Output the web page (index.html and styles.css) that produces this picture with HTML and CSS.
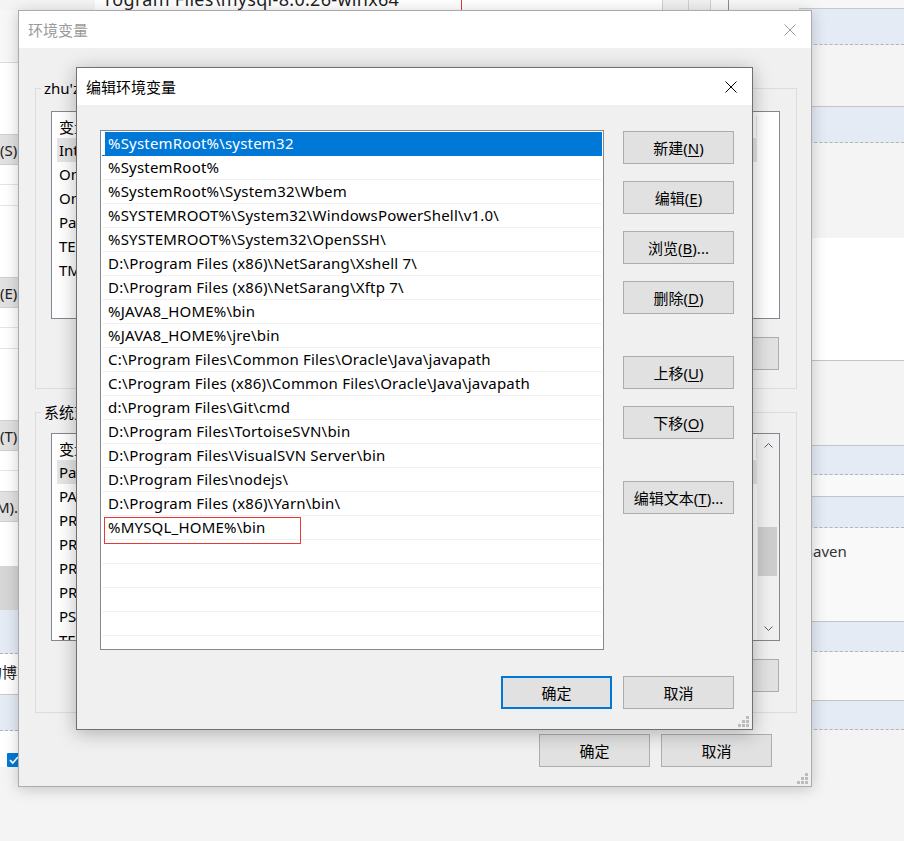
FILE: index.html
```html
<!DOCTYPE html>
<html lang="zh-CN">
<head>
  <meta charset="UTF-8">
  <meta name="viewport" content="width=device-width, initial-scale=1.0">
  <title>编辑环境变量</title>
  <link rel="stylesheet" href="styles.css">
</head>
<body>
  <div class="desktop">

    <!-- window behind both dialogs: top edge -->
    <div class="bg-top">
      <div class="bg-gap"></div>
      <div class="bg-path"><span class="bg-path-text">rogram Files\mysql-8.0.26-winx64</span></div>
      <div class="bg-mark"></div>
      <div class="bg-col bg-col-a"></div>
      <div class="bg-col bg-col-b"></div>
      <div class="bg-col bg-col-c"></div>
      <div class="bg-rest"></div>
    </div>

    <!-- window behind: left edge -->
    <div class="bg-left">
      <div class="bl-head"></div>
      <div class="bl-blank"></div>
      <div class="bl-btn">(S)...</div>
      <div class="bl-line bl-line-a"></div>
      <div class="bl-line bl-line-b"></div>
      <div class="bl-blank"></div>
      <div class="bl-btn">(E)...</div>
      <div class="bl-line bl-line-a"></div>
      <div class="bl-line bl-line-b"></div>
      <div class="bl-blank"></div>
      <div class="bl-btn">(T)...</div>
      <div class="bl-line bl-line-a"></div>
      <div class="bl-spacer"></div>
      <div class="bl-btn bl-btn-m">M)...</div>
      <div class="bl-tail"></div>
      <div class="bl-dark"></div>
      <div class="band band-tall"></div>
      <div class="bl-text">的博客</div>
      <div class="band band-mid"></div>
      <div class="bl-check">
        <svg width="14" height="14" viewBox="0 0 14 14"><path d="M3 7.2L5.8 10L11 4" fill="none" stroke="#fff" stroke-width="1.8"/></svg>
      </div>
    </div>

    <!-- window behind: right edge -->
    <div class="bg-right">
      <div class="br-top"></div>
      <div class="band band-36"></div>
      <div class="br-grey br-grey-62"></div>
      <div class="band band-36"></div>
      <div class="br-plain"></div>
      <div class="br-white br-white-123"></div>
      <div class="br-grey br-grey-85"></div>
      <div class="band band-29"></div>
      <div class="br-white br-white-22"></div>
      <div class="band band-31"></div>
      <div class="br-white br-white-94"><span class="br-text">maven</span></div>
      <div class="band band-30"></div>
      <div class="br-white br-white-49"></div>
      <div class="band band-29"></div>
    </div>

    <!-- 环境变量 dialog -->
    <div class="window window-env">
      <div class="titlebar is-inactive">
        <span class="title">环境变量</span>
        <span class="close">
          <svg width="12" height="12" viewBox="0 0 12 12"><path d="M0.5 0.5L11.5 11.5M11.5 0.5L0.5 11.5" stroke="currentColor" stroke-width="1"/></svg>
        </span>
      </div>
      <div class="env-body">
        <div class="group">
          <span class="group-label">zhu'zi 的用户变量(U)</span>
          <div class="vlist">
            <div class="vlist-main">
              <div class="vlist-head"><span class="col-name">变量</span><span class="col-value">值</span></div>
              <div class="vlist-row is-current"><span class="col-name">IntelliJ IDEA</span><span class="col-value">D:\Program Files\JetBrains\IntelliJ IDEA\bin;</span></div>
              <div class="vlist-row"><span class="col-name">OneDrive</span><span class="col-value">C:\Users\zhu'zi\OneDrive</span></div>
              <div class="vlist-row"><span class="col-name">OneDriveConsumer</span><span class="col-value">C:\Users\zhu'zi\OneDrive</span></div>
              <div class="vlist-row"><span class="col-name">Path</span><span class="col-value">C:\Users\zhu'zi\AppData\Local\Microsoft\WindowsApps;</span></div>
              <div class="vlist-row"><span class="col-name">TEMP</span><span class="col-value">C:\Users\zhu'zi\AppData\Local\Temp</span></div>
              <div class="vlist-row"><span class="col-name">TMP</span><span class="col-value">C:\Users\zhu'zi\AppData\Local\Temp</span></div>
            </div>
            <div class="vlist-side"></div>
          </div>
          <div class="group-actions">
            <button class="btn">新建(<u>N</u>)...</button>
            <button class="btn">编辑(<u>E</u>)...</button>
            <button class="btn">删除(<u>D</u>)</button>
          </div>
        </div>

        <div class="group group-system">
          <span class="group-label">系统变量(S)</span>
          <div class="vlist">
            <div class="vlist-main">
              <div class="vlist-head"><span class="col-name">变量</span><span class="col-value">值</span></div>
              <div class="vlist-row is-current"><span class="col-name">Path</span><span class="col-value">%SystemRoot%\system32;%SystemRoot%</span></div>
              <div class="vlist-row"><span class="col-name">PATHEXT</span><span class="col-value">.COM;.EXE;.BAT;.CMD;.VBS;.VBE;.JS</span></div>
              <div class="vlist-row"><span class="col-name">PROCESSOR_ARCHITECTURE</span><span class="col-value">AMD64</span></div>
              <div class="vlist-row"><span class="col-name">PROCESSOR_IDENTIFIER</span><span class="col-value">Intel64 Family 6</span></div>
              <div class="vlist-row"><span class="col-name">PROCESSOR_LEVEL</span><span class="col-value">6</span></div>
              <div class="vlist-row"><span class="col-name">PROCESSOR_REVISION</span><span class="col-value">9e0a</span></div>
              <div class="vlist-row"><span class="col-name">PSModulePath</span><span class="col-value">%ProgramFiles%\WindowsPowerShell\Modules</span></div>
              <div class="vlist-row"><span class="col-name">TEMP</span><span class="col-value">C:\Windows\TEMP</span></div>
            </div>
            <div class="vscroll">
              <div class="vscroll-btn">
                <svg width="9" height="5" viewBox="0 0 9 5"><path d="M0.5 4.5L4.5 0.5L8.5 4.5" fill="none" stroke="#606060" stroke-width="1"/></svg>
              </div>
              <div class="vscroll-track"><div class="vscroll-thumb"></div></div>
              <div class="vscroll-btn">
                <svg width="9" height="5" viewBox="0 0 9 5"><path d="M0.5 0.5L4.5 4.5L8.5 0.5" fill="none" stroke="#606060" stroke-width="1"/></svg>
              </div>
            </div>
          </div>
          <div class="group-actions">
            <button class="btn">新建(<u>W</u>)...</button>
            <button class="btn">编辑(<u>I</u>)...</button>
            <button class="btn">删除(<u>L</u>)</button>
          </div>
        </div>

        <div class="env-footer">
          <button class="btn">确定</button>
          <button class="btn">取消</button>
        </div>
      </div>
      <svg class="grip" width="11" height="11" viewBox="0 0 11 11"><path d="M8 0h3v3H8zM4 4h3v3H4zM8 4h3v3H8zM0 8h3v3H0zM4 8h3v3H4zM8 8h3v3H8z" fill="#bcbcbc"/></svg>
    </div>

    <!-- 编辑环境变量 dialog -->
    <div class="window window-edit">
      <div class="titlebar">
        <span class="title">编辑环境变量</span>
        <span class="close">
          <svg width="12" height="12" viewBox="0 0 12 12"><path d="M0.5 0.5L11.5 11.5M11.5 0.5L0.5 11.5" stroke="currentColor" stroke-width="1"/></svg>
        </span>
      </div>
      <div class="edit-body">
        <div class="path-list">
          <div class="path-row is-selected">%SystemRoot%\system32</div>
          <div class="path-row">%SystemRoot%</div>
          <div class="path-row">%SystemRoot%\System32\Wbem</div>
          <div class="path-row">%SYSTEMROOT%\System32\WindowsPowerShell\v1.0\</div>
          <div class="path-row">%SYSTEMROOT%\System32\OpenSSH\</div>
          <div class="path-row">D:\Program Files (x86)\NetSarang\Xshell 7\</div>
          <div class="path-row">D:\Program Files (x86)\NetSarang\Xftp 7\</div>
          <div class="path-row">%JAVA8_HOME%\bin</div>
          <div class="path-row">%JAVA8_HOME%\jre\bin</div>
          <div class="path-row">C:\Program Files\Common Files\Oracle\Java\javapath</div>
          <div class="path-row">C:\Program Files (x86)\Common Files\Oracle\Java\javapath</div>
          <div class="path-row">d:\Program Files\Git\cmd</div>
          <div class="path-row">D:\Program Files\TortoiseSVN\bin</div>
          <div class="path-row">D:\Program Files\VisualSVN Server\bin</div>
          <div class="path-row">D:\Program Files\nodejs\</div>
          <div class="path-row">D:\Program Files (x86)\Yarn\bin\</div>
          <div class="path-row is-marked">%MYSQL_HOME%\bin<span class="mark-box"></span></div>
          <div class="path-row"></div>
          <div class="path-row"></div>
          <div class="path-row"></div>
          <div class="path-row"></div>
          <div class="path-row"></div>
        </div>

        <div class="side-actions">
          <button class="btn">新建(<u>N</u>)</button>
          <button class="btn">编辑(<u>E</u>)</button>
          <button class="btn">浏览(<u>B</u>)...</button>
          <button class="btn">删除(<u>D</u>)</button>
          <button class="btn btn-apart">上移(<u>U</u>)</button>
          <button class="btn">下移(<u>O</u>)</button>
          <button class="btn btn-apart">编辑文本(<u>T</u>)...</button>
        </div>

        <div class="edit-footer">
          <button class="btn btn-default">确定</button>
          <button class="btn">取消</button>
        </div>
      </div>
      <svg class="grip" width="11" height="11" viewBox="0 0 11 11"><path d="M8 0h3v3H8zM4 4h3v3H4zM8 4h3v3H8zM0 8h3v3H0zM4 8h3v3H4zM8 8h3v3H8z" fill="#bcbcbc"/></svg>
    </div>

  </div>
</body>
</html>
```

FILE: styles.css
```css
/* Global */
* {
  box-sizing: border-box;
}
body {
  margin: 0;
  background: #f4f4f4;
  font-family: "Noto Sans", "Noto Sans CJK SC", sans-serif;
  font-size: 15px;
  color: #000;
}
.desktop {
  position: relative;
  width: 904px;
  height: 841px;
  overflow: hidden;
}

/* Background window - top edge */
.bg-top {
  position: absolute;
  left: 0;
  top: 0;
  width: 904px;
  height: 10px;
  display: flex;
  background: #f4f4f4;
}
.bg-gap { width: 95px; }
.bg-path {
  width: 366px;
  background: #fff;
  overflow: hidden;
}
.bg-path-text {
  display: block;
  margin-top: -11px;
  padding-left: 10px;
  font-size: 18px;
  line-height: 20px;
  letter-spacing: 0.3px;
  color: #1e1e1e;
  white-space: nowrap;
}
.bg-mark {
  width: 201px;
  background: #fff;
  border-left: 1px solid #e53935;
}
.bg-col {
  border-left: 1px solid #cfcfcf;
  background: #f0f0f0;
}
.bg-col-a { width: 26px; }
.bg-col-b { width: 22px; }
.bg-col-c { width: 18px; background: #f7f7f7; }
.bg-rest {
  flex: 1;
  border-left: 1px solid #8c8c8c;
  background: #f7f7f7;
}

/* Background window - left edge */
.bg-left {
  position: absolute;
  left: 0;
  top: 10px;
  width: 18px;
  height: 831px;
  background: #fff;
  overflow: hidden;
}
.bl-head {
  height: 53px;
  background: #f7f7f7;
  border-bottom: 1px solid #dcdcdc;
}
.bl-blank { height: 71px; }
.bl-btn {
  height: 31px;
  line-height: 30px;
  background: #e1e1e1;
  border-top: 1px solid #cfcfcf;
  border-bottom: 1px solid #cfcfcf;
  white-space: nowrap;
  color: #222;
}
.bl-btn-m { margin-left: -4px; }
.bl-line {
  border-bottom: 1px solid #e4e4e4;
}
.bl-line-a { height: 20px; }
.bl-line-b { height: 21px; }
.bl-spacer { height: 20px; }
.bl-tail { height: 44px; }
.bl-dark {
  height: 44px;
  background: #d6d6d6;
}
.band {
  background: #e4ebf5;
  border-bottom: 1px dashed #b4b4b4;
}
.band-tall { height: 44px; }
.band-mid { height: 36px; }
.bl-text {
  height: 41px;
  line-height: 36px;
  margin-left: -13px;
  border-bottom: 1px solid #c9c9c9;
  white-space: nowrap;
  color: #222;
}
.bl-check {
  width: 14px;
  height: 14px;
  margin: 22px 0 0 7px;
  background: #0078d7;
  border-radius: 1px;
  display: flex;
}
.bl-check ~ * { display: none; }
.bg-left::after {
  content: "";
  display: block;
  height: 80px;
  background: #f4f4f4;
}

/* Background window - right edge */
.bg-right {
  position: absolute;
  left: 799px;
  top: 0;
  width: 105px;
  height: 841px;
  background: #f4f4f4;
}
.br-top {
  height: 9px;
  background: #f7f7f7;
  border-bottom: 1px solid #c9c9c9;
}
.band-36 { height: 36px; }
.band-29 { height: 29px; }
.band-30 { height: 30px; }
.band-31 { height: 31px; }
.br-grey { border-bottom: 1px solid #c4c4c4; }
.br-grey-62 { height: 62px; }
.br-grey-85 { height: 85px; }
.br-plain { height: 95px; }
.br-white {
  background: #f9f9f9;
  border-bottom: 1px solid #c4c4c4;
}
.br-white-123 { height: 123px; background: #fff; }
.br-white-22 { height: 22px; }
.br-white-94 {
  height: 94px;
  padding-top: 13px;
}
.br-white-49 { height: 49px; }
.br-text {
  color: #333;
  line-height: 20px;
}

/* Windows */
.window {
  position: absolute;
  display: flex;
  flex-direction: column;
  background: #f0f0f0;
}
.window-env {
  left: 18px;
  top: 10px;
  width: 794px;
  height: 777px;
  border: 1px solid #ababab;
  box-shadow: 0 2px 14px rgba(0, 0, 0, 0.2);
}
.window-edit {
  left: 76px;
  top: 67px;
  width: 677px;
  height: 663px;
  border: 1px solid #707070;
  box-shadow: 0 3px 18px rgba(0, 0, 0, 0.28);
}
.titlebar {
  flex: none;
  height: 37px;
  background: #fff;
  display: flex;
  align-items: center;
  justify-content: space-between;
  padding-left: 9px;
  color: #000;
}
.titlebar.is-inactive {
  color: #9a9a9a;
}
.close {
  width: 42px;
  height: 37px;
  display: flex;
  align-items: center;
  justify-content: center;
}
.grip {
  position: absolute;
  right: 3px;
  bottom: 2px;
}

/* Buttons */
.btn {
  width: 111px;
  height: 33px;
  padding: 0;
  font: inherit;
  color: #000;
  background: #e1e1e1;
  border: 1px solid #adadad;
  border-radius: 0;
}
.btn u {
  text-underline-offset: 2px;
}
.btn-default {
  border: 2px solid #0078d7;
}

/* 环境变量 body */
.env-body {
  flex: 1;
  padding: 40px 14px 0 16px;
}
.group {
  position: relative;
  border: 1px solid #dcdcdc;
  padding: 22px 16px 18px 15px;
}
.group-system {
  margin-top: 23px;
  padding-top: 20px;
  padding-bottom: 20px;
}
.group-label {
  position: absolute;
  left: 5px;
  top: -11px;
  padding: 0 3px;
  line-height: 20px;
  background: #f0f0f0;
  white-space: nowrap;
}
.vlist {
  height: 208px;
  display: flex;
  background: #fff;
  border: 1px solid #828790;
  overflow: hidden;
}
.vlist-main {
  flex: 1;
  overflow: hidden;
}
.vlist-side {
  width: 22px;
}
.vlist-head {
  display: flex;
  align-items: center;
  height: 26px;
  padding-top: 3px;
}
.vlist-head .col-name {
  padding-left: 7px;
}
.vlist-head .col-value {
  flex: 1;
  border-left: 1px solid #e5e5e5;
  border-right: 1px solid #e5e5e5;
  padding-left: 6px;
}
.vlist-row {
  display: flex;
  align-items: center;
  height: 24px;
  margin-left: 5px;
  white-space: nowrap;
}
.vlist-row .col-name {
  padding-left: 2px;
}
.vlist-row.is-current {
  background: #e5e5e5;
}
.col-name {
  width: 240px;
  flex: none;
  overflow: hidden;
}
.col-value {
  overflow: hidden;
}
.vscroll {
  width: 22px;
  display: flex;
  flex-direction: column;
  background: #f0f0f0;
}
.vscroll-btn {
  height: 23px;
  display: flex;
  align-items: center;
  justify-content: center;
}
.vscroll-track {
  flex: 1;
}
.vscroll-thumb {
  height: 49px;
  margin: 70px 2px 0 1px;
  background: #cdcdcd;
}
.group-actions {
  display: flex;
  justify-content: flex-end;
  gap: 11px;
  margin-top: 18px;
  padding-right: 1px;
}
.env-footer {
  display: flex;
  justify-content: flex-end;
  gap: 11px;
  margin-top: 21px;
  padding-right: 25px;
}

/* 编辑环境变量 body */
.edit-body {
  flex: 1;
  display: grid;
  grid-template-columns: 504px 111px;
  column-gap: 19px;
  align-content: start;
  padding: 25px 0 0 23px;
}
.path-list {
  height: 520px;
  padding: 1px 1px 0 1px;
  background: #fff;
  border: 1px solid #828790;
  overflow: hidden;
}
.path-row {
  position: relative;
  height: 24px;
  line-height: 23px;
  padding-left: 6px;
  border-bottom: 1px solid #f0f0f0;
  letter-spacing: 0.2px;
  white-space: nowrap;
}
.path-row.is-selected {
  background: #0078d7;
  border-bottom-color: #0078d7;
  box-shadow: inset 3px 0 0 #fff;
  color: #fff;
}
.mark-box {
  position: absolute;
  left: 2px;
  top: 1px;
  width: 197px;
  height: 27px;
  border: 1px solid #e53935;
}
.side-actions {
  display: flex;
  flex-direction: column;
  gap: 17px;
  padding-top: 1px;
}
.btn-apart {
  margin-top: 25px;
}
.edit-footer {
  grid-column: 1 / -1;
  display: flex;
  justify-content: flex-end;
  gap: 11px;
  margin-top: 26px;
}
```
